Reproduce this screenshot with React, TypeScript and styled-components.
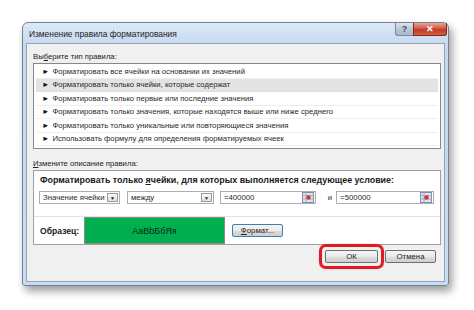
import * as React from 'react'
import styled, { createGlobalStyle } from 'styled-components'

const GlobalStyle = createGlobalStyle`
  html, body {
    margin: 0;
    padding: 0;
    background: #ffffff;
  }
  body {
    font-family: 'Liberation Sans', Arial, sans-serif;
    font-size: 7.7px;
    color: #222;
  }
`

const Page = styled.div`
  width: 474px;
  height: 310px;
  box-sizing: border-box;
  padding: 22px 0 0 22px;
`

const Window = styled.div`
  width: 427px;
  height: 264px;
  box-sizing: border-box;
  border: 1px solid #6f8299;
  border-radius: 6px 6px 3px 3px;
  background: linear-gradient(#dde9f6, #c6d8ed 22px, #cadcef);
  box-shadow: 3px 5px 9px rgba(0, 0, 0, 0.4);
  display: flex;
  flex-direction: column;
  padding: 0 3px 3px 3px;
`

const TitleBar = styled.div`
  height: 20px;
  display: flex;
  justify-content: space-between;
  align-items: flex-start;
`

const TitleText = styled.span`
  font-size: 8.4px;
  color: #1b1b1b;
  padding: 6px 0 0 3px;
`

const CaptionButtons = styled.div`
  display: flex;
  margin-right: -2px;
`

const HelpButton = styled.div`
  width: 18px;
  height: 13px;
  box-sizing: border-box;
  border: 1px solid #7b8a9c;
  border-top: none;
  border-right: none;
  border-radius: 0 0 0 3px;
  background: linear-gradient(#dfe6ee, #b9c6d5 50%, #a9b9cb);
  color: #3f4c5c;
  font-size: 9px;
  font-weight: 700;
  display: flex;
  align-items: center;
  justify-content: center;
`

const CloseButton = styled.div`
  width: 34px;
  height: 13px;
  box-sizing: border-box;
  border: 1px solid #7a2a20;
  border-top: none;
  border-radius: 0 0 3px 0;
  background: linear-gradient(#e9a596, #d45a44 45%, #c23a24 55%, #d35e43);
  color: #ffffff;
  font-size: 9px;
  font-weight: 700;
  display: flex;
  align-items: center;
  justify-content: center;
`

const Content = styled.div`
  flex: 1;
  background: #f0f0f0;
  border: 1px solid #8fa3ba;
  display: flex;
  flex-direction: column;
  padding: 7px 4px 0 6px;
`

const SectionLabel = styled.div<{ $top?: number }>`
  height: 12px;
  line-height: 12px;
  margin-top: ${p => p.$top ?? 0}px;
  color: #222;
`

const ListBox = styled.div`
  width: 408px;
  box-sizing: border-box;
  border: 1px solid #828790;
  background: #ffffff;
  padding: 1px 2px 2px 2px;
`

const ListRow = styled.div<{ $selected?: boolean }>`
  height: 13.5px;
  line-height: 13px;
  box-sizing: border-box;
  border-bottom: 1px solid ${p => (p.$selected ? '#dcdcdc' : '#efefef')};
  background: ${p => (p.$selected ? '#e3e3e3' : 'transparent')};
  display: flex;
  align-items: center;
  padding-left: 6px;
  color: #2a2a2a;
  white-space: nowrap;
`

const Arrow = styled.span`
  font-size: 7.5px;
  margin-right: 3px;
  color: #111;
`

const DescBox = styled.div`
  width: 408px;
  box-sizing: border-box;
  border: 1px solid #a0a0a0;
  background: #ffffff;
  display: flex;
  flex-direction: column;
`

const RuleSection = styled.div`
  padding: 3px 6px 0 6px;
  height: 46px;
  box-sizing: border-box;
  border-bottom: 1px solid #e2e2e2;
`

const RuleHeader = styled.div`
  height: 12px;
  line-height: 12px;
  font-weight: 700;
  font-size: 8.9px;
  color: #1a1a1a;
  white-space: nowrap;
`

const ControlRow = styled.div`
  display: flex;
  align-items: center;
  margin-top: 5px;
  margin-left: -1px;
`

const Field = styled.div<{ $width: number; $gap?: number }>`
  width: ${p => p.$width}px;
  height: 13px;
  box-sizing: border-box;
  border: 1px solid #abadb3;
  background: #ffffff;
  display: flex;
  align-items: center;
  justify-content: space-between;
  padding: 0 1px 0 3px;
  margin-left: ${p => p.$gap ?? 0}px;
  color: #2a2a2a;
  font-size: 7.8px;
`

const DropButton = styled.div`
  width: 11px;
  height: 9px;
  box-sizing: border-box;
  border: 1px solid #9a9a9a;
  background: linear-gradient(#fafafa, #dedede);
  display: flex;
  align-items: center;
  justify-content: center;
  font-size: 5px;
  color: #222;
`

const AndLabel = styled.span`
  margin-left: 12px;
  margin-right: 4px;
  color: #333;
`

const SampleSection = styled.div`
  flex: 1;
  display: flex;
  align-items: center;
  padding: 0 6px;
`

const SampleLabel = styled.span`
  font-weight: 700;
  font-size: 8.6px;
  width: 44px;
  color: #1a1a1a;
`

const Preview = styled.div`
  width: 141px;
  height: 27px;
  box-sizing: border-box;
  border: 1px solid #9b8585;
  background: #00b050;
  color: #0a2a10;
  font-size: 9px;
  display: flex;
  align-items: center;
  justify-content: center;
`

const Button = styled.div<{ $width: number; $focused?: boolean }>`
  width: ${p => p.$width}px;
  height: 13px;
  box-sizing: border-box;
  border: 1px solid ${p => (p.$focused ? '#3c7fb1' : '#707070')};
  border-radius: 2px;
  background: linear-gradient(#f4f4f4, #ebebeb 50%, #dddddd 51%, #cfcfcf);
  display: flex;
  align-items: center;
  justify-content: center;
  color: #222;
  font-size: 7.8px;
`

const FormatButton = styled(Button)`
  margin-left: 7px;
`

const ButtonRow = styled.div`
  display: flex;
  justify-content: flex-end;
  align-items: center;
  gap: 7px;
  margin-top: 5px;
  padding-right: 4px;
`

const Highlight = styled.div`
  margin: -6px;
  padding: 3px;
  border: 3px solid #e01b24;
  border-radius: 7px;
  box-shadow: 0 0 1px rgba(180, 0, 0, 0.6);
`

const RangeIcon: React.FC = () => (
  <svg width="12" height="11" viewBox="0 0 12 11">
    <rect x="0.5" y="0.5" width="11" height="10" fill="#dbe6f2" stroke="#7d8ea3" />
    <line x1="0.5" y1="3.5" x2="11.5" y2="3.5" stroke="#9fb0c4" />
    <line x1="0.5" y1="7" x2="11.5" y2="7" stroke="#9fb0c4" />
    <line x1="4" y1="0.5" x2="4" y2="10.5" stroke="#9fb0c4" />
    <circle cx="6.5" cy="5.5" r="2.3" fill="#e0303a" />
  </svg>
)

const rules = [
  'Форматировать все ячейки на основании их значений',
  'Форматировать только ячейки, которые содержат',
  'Форматировать только первые или последние значения',
  'Форматировать только значения, которые находятся выше или ниже среднего',
  'Форматировать только уникальные или повторяющиеся значения',
  'Использовать формулу для определения форматируемых ячеек',
]

export default function App() {
  return (
    <>
      <GlobalStyle />
      <Page>
        <Window>
          <TitleBar>
            <TitleText>Изменение правила форматирования</TitleText>
            <CaptionButtons>
              <HelpButton>?</HelpButton>
              <CloseButton>✕</CloseButton>
            </CaptionButtons>
          </TitleBar>
          <Content>
            <SectionLabel>
              Вы<u>б</u>ерите тип правила:
            </SectionLabel>
            <ListBox>
              {rules.map((r, i) => (
                <ListRow key={r} $selected={i === 1}>
                  <Arrow>►</Arrow>
                  {r}
                </ListRow>
              ))}
            </ListBox>
            <SectionLabel $top={9}>
              <u>И</u>змените описание правила:
            </SectionLabel>
            <DescBox>
              <RuleSection>
                <RuleHeader>
                  Форматировать только <u>я</u>чейки, для которых выполняется следующее условие:
                </RuleHeader>
                <ControlRow>
                  <Field $width={81}>
                    Значение ячейки
                    <DropButton>▼</DropButton>
                  </Field>
                  <Field $width={87} $gap={7}>
                    между
                    <DropButton>▼</DropButton>
                  </Field>
                  <Field $width={96} $gap={6}>
                    =400000
                    <RangeIcon />
                  </Field>
                  <AndLabel>и</AndLabel>
                  <Field $width={98}>
                    =500000
                    <RangeIcon />
                  </Field>
                </ControlRow>
              </RuleSection>
              <SampleSection>
                <SampleLabel>Образец:</SampleLabel>
                <Preview>AaBbБбЯя</Preview>
                <FormatButton $width={51} $focused>
                  <span>
                    <u>Ф</u>ормат...
                  </span>
                </FormatButton>
              </SampleSection>
            </DescBox>
            <ButtonRow>
              <Highlight>
                <Button $width={53}>ОК</Button>
              </Highlight>
              <Button $width={51}>Отмена</Button>
            </ButtonRow>
          </Content>
        </Window>
      </Page>
    </>
  )
}
